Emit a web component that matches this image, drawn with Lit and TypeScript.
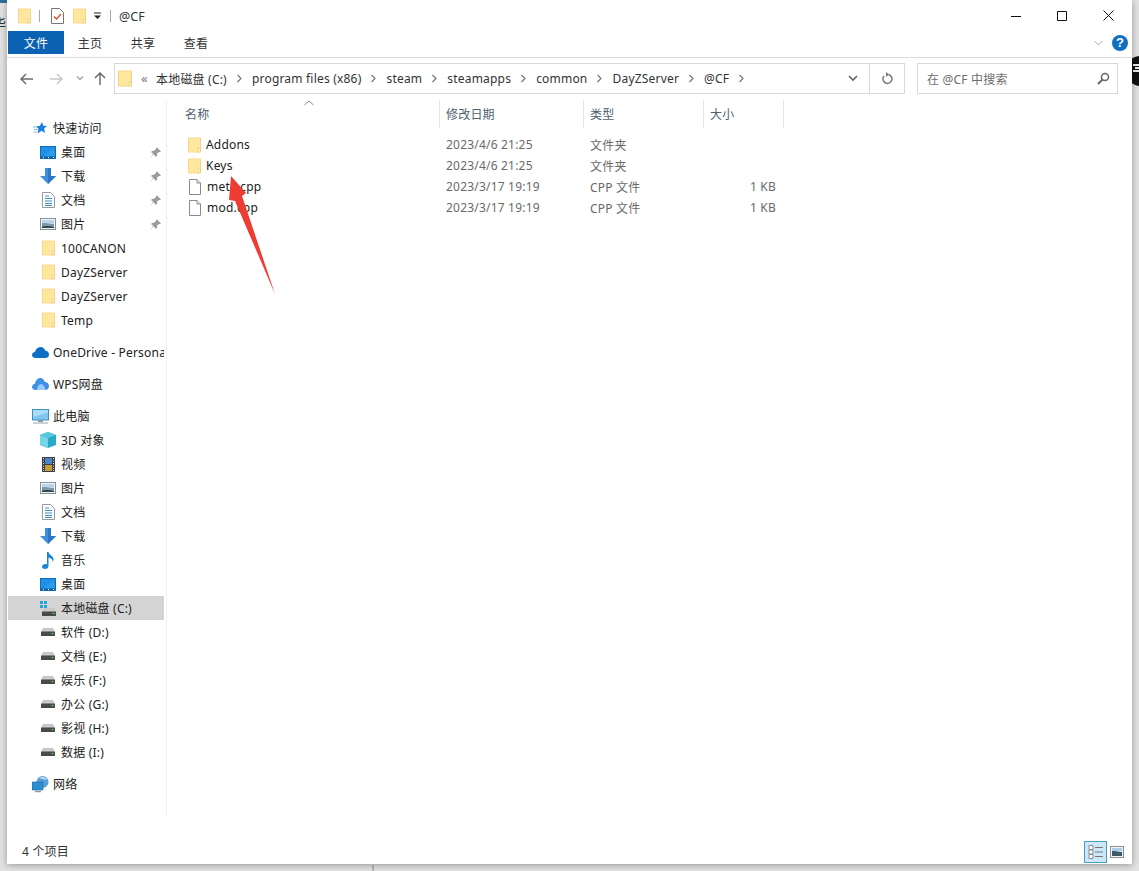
import { LitElement, html, css, svg } from "lit";
import { customElement } from "lit/decorators.js";

const folder = (w = 13, h = 16) => html`<svg width=${w} height=${h} viewBox="0 0 14 16"><path d="M.5.5h13v15H.5z" fill="#fee39a" stroke="#f3d27c"/><path d="M1 1h12v10.500H11v3.500H1z" fill="#ffe79f"/><path d="M11 11.500h2.500v4H11z" fill="#fff6d6" stroke="#eccb70" stroke-width=".8"/></svg>`;
const blank = html`<svg width="14" height="16" viewBox="0 0 14 16"><path d="M1.500.5h7.500l3.500 3.500v11.500h-11z" fill="#fff" stroke="#8a8a8a"/><path d="M9 .5v3.500h3.500" fill="#f0f0f0" stroke="#8a8a8a"/></svg>`;
const desktop = html`<svg width="16" height="13" viewBox="0 0 16 13"><rect x=".5" y=".5" width="15" height="12" fill="#1e90e6" stroke="#0f6cb8"/><path d="M3 10.500 14 2v8.500z" fill="#2e9cec"/><path d="M1 10.500h14v1.500H1z" fill="#0b5c9e"/><path d="M3 11.500h1M8 11.500h1M13 11.500h1" stroke="#fff"/></svg>`;
const download = html`<svg width="16" height="16" viewBox="0 0 16 16"><path d="M5 0h6v8h5l-8 8-8-8h5z" fill="#3e90de"/><path d="M8 0h3v8h5l-8 8z" fill="#2b78c6"/></svg>`;
const docIcon = html`<svg width="13" height="16" viewBox="0 0 13 16"><path d="M.5.5h8l4 4v11H.5z" fill="#fff" stroke="#9a9a9a"/><path d="M3 4h4M3 6.500h7M3 9h7M3 11.500h7M3 13.500h7" stroke="#3b8fc9"/></svg>`;
const picture = html`<svg width="16" height="12" viewBox="0 0 16 12"><rect x=".5" y=".5" width="15" height="11" fill="#f4f4f4" stroke="#8b8f93"/><path d="M2 2h12v3.500H2z" fill="#b7d6ee"/><path d="M2 5c4 0 7 .5 12 1v4H2z" fill="#7b98a4"/><path d="M2 8.500c4-1 8-.5 12 .5v1H2z" fill="#2d4552"/></svg>`;
const pin = html`<svg width="11" height="11" viewBox="0 0 11 11"><path d="M6.500 0 11 4.500l-1 .5-1-.2-2 2 .1 2L6 10 3.800 7.200 0 11l3.300-4.300L1 5l1.200-1.100 2-.1 2-2z" fill="#9a9a9a"/></svg>`;
const star = html`<svg width="14" height="12" viewBox="0 0 14 12"><path d="M9 0l1.300 3.700 3.700.3-2.800 2.600L12 11 8.500 8.800 4.500 11.500l1-4.500L3 4.300l3.800-.3z" fill="#1b80d6"/><path d="M0 5h3M1 7.500h3.500M.5 10H4" stroke="#7bbbea"/></svg>`;
const oneDrive = html`<svg width="17" height="11" viewBox="0 0 17 11"><path d="M3.500 11C1 11 0 9.500 0 8s1.200-3 3-3c.6-2.800 2.600-5 5.500-5 2.400 0 4 1.500 4.700 3.500C15.500 3.800 17 5.500 17 7.500S15.500 11 13.500 11z" fill="#0f6fc4"/></svg>`;
const wps = html`<svg width="17" height="12" viewBox="0 0 17 12"><path d="M3.500 12C1.200 12 0 10.500 0 9s1-3 2.800-3C3.500 3 5.300 0 8.200 0c2.300 0 3.800 1.700 4.400 3.800C15 4 17 5.800 17 8s-1.700 4-3.500 4z" fill="#3d8fe8"/><path d="M5 12c0-3 2-6 4-6s4 3 4.500 6z" fill="#9cc9f5"/></svg>`;
const pc = html`<svg width="17" height="15" viewBox="0 0 17 15"><rect x=".5" y=".5" width="16" height="10.500" fill="#7ec6ee" stroke="#3f8fc0"/><path d="M1 1h15v2.500L1 8z" fill="#a9dcf6"/><path d="M6 11h5v2H6z" fill="#8d9aa3"/><path d="M1 14h15" stroke="#9aa3aa"/></svg>`;
const cube = html`<svg width="16" height="16" viewBox="0 0 16 16"><path d="M8 0 16 3v10l-8 3-8-3V3z" fill="#2aa7c9"/><path d="M0 3 8 6v10l-8-3z" fill="#73d6e6"/><path d="M8 0 16 3 8 6 0 3z" fill="#55c8de"/></svg>`;
const video = html`<svg width="13" height="15" viewBox="0 0 13 15"><rect width="13" height="15" fill="#3a3f47"/><rect x="3" y="1" width="7" height="6" fill="#4f82c9"/><rect x="3" y="8" width="7" height="6" fill="#c99c3c"/><path d="M1 1.500h1M1 4h1M1 6.500h1M1 9h1M1 11.500h1M1 13.500h1M11 1.500h1M11 4h1M11 6.500h1M11 9h1M11 11.500h1M11 13.500h1" stroke="#ddd"/></svg>`;
const music = html`<svg width="12" height="17" viewBox="0 0 12 17"><path d="M5 0h1.500c.5 3 5 3.500 5 7.500 0 1-.3 1.800-.8 2.500.2-2.500-2.200-4-4.200-4.500V14c0 1.700-1.500 3-3.500 3C1.500 17 0 16.200 0 14.800 0 13.200 1.700 12 3.300 12c.6 0 1.200.1 1.700.4z" fill="#1b86d8"/></svg>`;
const drive = html`<svg width="14" height="8" viewBox="0 0 14 8"><path d="M2 0h10l2 4H0z" fill="#c8c8c8"/><rect y="3.500" width="14" height="4.500" rx=".5" fill="#4a4a4a"/><path d="M10.500 5.500h2" stroke="#4fdc6a"/></svg>`;
const cDrive = html`<svg width="16" height="15" viewBox="0 0 16 15"><path d="M0 0h3v3H0zM4 0h3v3H4zM0 4h3v3H0zM4 4h3v3H4z" fill="#1ea7dc"/><path d="M4 7h10l2 4H2z" fill="#c8c8c8"/><rect x="2" y="10.500" width="14" height="4.500" rx=".5" fill="#4a4a4a"/><path d="M12.500 12.500h2" stroke="#4fdc6a"/></svg>`;
const network = html`<svg width="17" height="17" viewBox="0 0 17 17"><circle cx="10.500" cy="6" r="6" fill="#5a9fd8"/><path d="M7 2c3-2 7-1 8 2-3-1-6-1-8-2z" fill="#bcdcf2"/><rect x="0" y="6" width="11" height="8" fill="#2d8fd0" stroke="#1a6a9e" stroke-width=".6"/><path d="M3 15.500h6" stroke="#8d9aa3" stroke-width="1.500"/></svg>`;

const chev = svg`<path d="M1.500 1 5 4.500 1.500 8" fill="none" stroke="#777" stroke-width="1.200"/>`;

type Row = { icon: unknown; text: string; level: number; pin?: boolean; sel?: boolean; gap?: boolean };
const nav: Row[] = [
  { icon: star, text: "快速访问", level: 0 },
  { icon: desktop, text: "桌面", level: 1, pin: true },
  { icon: download, text: "下载", level: 1, pin: true },
  { icon: docIcon, text: "文档", level: 1, pin: true },
  { icon: picture, text: "图片", level: 1, pin: true },
  { icon: folder(), text: "100CANON", level: 1 },
  { icon: folder(), text: "DayZServer", level: 1 },
  { icon: folder(), text: "DayZServer", level: 1 },
  { icon: folder(), text: "Temp", level: 1 },
  { icon: oneDrive, text: "OneDrive - Personal", level: 0, gap: true },
  { icon: wps, text: "WPS网盘", level: 0, gap: true },
  { icon: pc, text: "此电脑", level: 0, gap: true },
  { icon: cube, text: "3D 对象", level: 1 },
  { icon: video, text: "视频", level: 1 },
  { icon: picture, text: "图片", level: 1 },
  { icon: docIcon, text: "文档", level: 1 },
  { icon: download, text: "下载", level: 1 },
  { icon: music, text: "音乐", level: 1 },
  { icon: desktop, text: "桌面", level: 1 },
  { icon: cDrive, text: "本地磁盘 (C:)", level: 1, sel: true },
  { icon: drive, text: "软件 (D:)", level: 1 },
  { icon: drive, text: "文档 (E:)", level: 1 },
  { icon: drive, text: "娱乐 (F:)", level: 1 },
  { icon: drive, text: "办公 (G:)", level: 1 },
  { icon: drive, text: "影视 (H:)", level: 1 },
  { icon: drive, text: "数据 (I:)", level: 1 },
  { icon: network, text: "网络", level: 0, gap: true },
];

const files = [
  { icon: folder(), name: "Addons", date: "2023/4/6 21:25", type: "文件夹", size: "" },
  { icon: folder(), name: "Keys", date: "2023/4/6 21:25", type: "文件夹", size: "" },
  { icon: blank, name: "meta.cpp", date: "2023/3/17 19:19", type: "CPP 文件", size: "1 KB" },
  { icon: blank, name: "mod.cpp", date: "2023/3/17 19:19", type: "CPP 文件", size: "1 KB" },
];

const crumbs = ["本地磁盘 (C:)", "program files (x86)", "steam", "steamapps", "common", "DayZServer", "@CF"];

@customElement("app-root")
export class AppRoot extends LitElement {
  static styles = css`
    :host {
      display: block;
      position: relative;
      width: 1139px;
      height: 871px;
      overflow: hidden;
      background: #e2e2e2;
      font-family: "Noto Sans", "Noto Sans CJK SC", sans-serif;
      font-size: 12px;
      letter-spacing: 0.2px;
      color: #1c1c1c;
    }
    svg { display: block; flex: none; }
    .window {
      position: absolute;
      left: 7px;
      top: 0;
      width: 1125px;
      height: 864px;
      background: #fff;
      display: flex;
      flex-direction: column;
      box-shadow: 0 1px 7px rgba(0, 0, 0, 0.35);
    }
    .title { height: 31px; display: flex; align-items: center; padding-left: 11px; }
    .sep { width: 1px; height: 12px; background: #a8a8a8; }
    .title-text { margin-left: 8px; color: #333; font-size: 12.5px; letter-spacing: 0; padding-top: 1px; }
    .controls { margin-left: auto; display: flex; padding-right: 1px; }
    .ctl { width: 46px; height: 31px; display: flex; align-items: center; justify-content: center; }
    .tabs { height: 23px; display: flex; align-items: stretch; padding-left: 1px; }
    .tab { width: 53px; display: flex; align-items: center; justify-content: center; color: #333; padding-right: 1px; box-sizing: border-box; }
    .tab-file { width: 56px; background: #0b62b2; color: #fff; padding-right: 0; }
    .tabs-right { margin-left: auto; display: flex; align-items: center; gap: 9px; padding-right: 4px; }
    .help {
      width: 16px; height: 16px; border-radius: 50%; background: #0f6fc0; color: #fff;
      font: bold 13px/16px "Liberation Sans", sans-serif; text-align: center;
    }
    .addr-row {
      height: 38px; margin-top: 3px; border-top: 1px solid #dcdcdc; box-sizing: border-box;
      display: flex; align-items: center; padding: 5px 14px 1px 13px;
    }
    .navs { width: 94px; display: flex; align-items: center; }
    .addr {
      width: 791px; height: 31px; box-sizing: border-box; border: 1px solid #d9d9d9;
      display: flex; align-items: center; padding-left: 3px;
    }
    .crumbs { display: flex; align-items: center; flex: 1; color: #333; }
    .back { width: 24px; color: #777; padding-left: 9px; box-sizing: border-box; font-size: 13px; line-height: 1; }
    .cs { width: 25px; display: flex; justify-content: center; }
    .addr-down { width: 32px; display: flex; justify-content: center; }
    .refresh { width: 34px; height: 100%; border-left: 1px solid #d9d9d9; display: flex; align-items: center; justify-content: center; }
    .search {
      width: 201px; height: 31px; margin-left: 12px; box-sizing: border-box; border: 1px solid #d9d9d9;
      display: flex; align-items: center; padding: 0 7px 0 9px; color: #6d6d6d;
    }
    .search svg { margin-left: auto; }
    .body { flex: 1; display: flex; min-height: 0; margin-top: 5px; }
    .side { width: 156px; padding-top: 16px; overflow: hidden; flex: none; margin: 0 2px 0 1px; }
    .row { height: 24px; display: flex; align-items: center; white-space: nowrap; color: #222; }
    .row.gap { margin-top: 8px; }
    .row.sel { background: #d4d4d4; }
    .ic { width: 16px; height: 24px; display: flex; align-items: center; justify-content: center; flex: none; margin-right: 5px; }
    .l0 { padding-left: 24px; }
    .l1 { padding-left: 32px; }
    .pin { margin-left: auto; margin-right: 3px; }
    .vline { width: 1px; background: #efefef; margin-bottom: 24px; flex: none; }
    .main { flex: 1; padding-left: 11px; position: relative; }
    .head { display: grid; grid-template-columns: 262px 144px 120px 80px; height: 28px; }
    .hc { border-right: 1px solid #e4e4e4; padding-left: 6px; color: #4f5f70; display: flex; align-items: center; }
    .hc:first-child { padding-left: 7px; }
    .caret { position: absolute; left: 137px; top: 0; }
    .files { margin-top: 6px; }
    .file { display: grid; grid-template-columns: 262px 144px 120px 80px; height: 21px; align-items: center; color: #6a6a6a; }
    .name { display: flex; align-items: center; gap: 5px; padding-left: 10px; color: #1c1c1c; }
    .date, .type { padding-left: 6px; }
    .size { text-align: right; padding-right: 8px; }
    .status { height: 24px; display: flex; align-items: center; justify-content: space-between; padding: 0 8px 0 15px; color: #333; }
    .status span { padding-bottom: 2px; }
    .views { display: flex; align-items: center; gap: 3px; }
    .view-on {
      width: 23px; height: 22px; box-sizing: border-box; background: #cce8f8; border: 1px solid #4a9cc4;
      display: flex; align-items: center; justify-content: center;
    }
    .arrow { position: absolute; left: 225px; top: 170px; pointer-events: none; }
    .left-char { position: absolute; left: -8px; top: 14px; font-size: 14px; color: #333; line-height: 20px; }
    .left-top { position: absolute; left: 0; top: 0; width: 7px; height: 3px; background: #2f6f9f; }
    .blob { position: absolute; left: 1126px; top: 56px; width: 28px; height: 30px; border-radius: 50%; background: #111; }
    .blob-mark { position: absolute; left: 1133px; top: 64px; width: 6px; height: 2px; background: #eee; box-shadow: 0 6px 0 #eee, 2px 3px 0 #eee; }
    .bottom-mark { position: absolute; left: 372px; top: 865px; width: 2px; height: 6px; background: #b8b8b8; }
  `;

  render() {
    return html`
      <div class="left-top"></div>
      <div class="left-char">毕</div>
      <div class="blob"></div>
      <div class="blob-mark"></div>
      <div class="bottom-mark"></div>
      <div class="window">
        <div class="title">
          ${folder()}
          <div class="sep" style="margin:0 11px 0 8px"></div>
          <svg width="13" height="16" viewBox="0 0 13 16"><path d="M.5.500h8l4 4v11H.5z" fill="#fff" stroke="#777"/><path d="M3 8.500l2.500 2.500L10 6" fill="none" stroke="#d9532c" stroke-width="1.400"/></svg>
          <div style="width:9px"></div>
          ${folder()}
          <svg style="margin:0 5px 0 7px" width="9" height="8" viewBox="0 0 9 8"><path d="M1 1h7" stroke="#222"/><path d="M1 3.500h7L4.500 7z" fill="#222"/></svg>
          <div class="sep" style="margin-left:3px"></div>
          <span class="title-text">@CF</span>
          <div class="controls">
            <div class="ctl"><svg width="10" height="10" viewBox="0 0 10 10"><path d="M0 5.500h10" stroke="#111"/></svg></div>
            <div class="ctl"><svg width="10" height="10" viewBox="0 0 10 10"><path d="M.5.500h9v9h-9z" fill="none" stroke="#111"/></svg></div>
            <div class="ctl"><svg width="11" height="11" viewBox="0 0 11 11"><path d="M.5.500l10 10M10.500.500l-10 10" stroke="#111"/></svg></div>
          </div>
        </div>
        <div class="tabs">
          <div class="tab tab-file">文件</div>
          <div class="tab">主页</div>
          <div class="tab">共享</div>
          <div class="tab">查看</div>
          <div class="tabs-right">
            <svg width="9" height="6" viewBox="0 0 9 6"><path d="M.5 1 4.500 5 8.500 1" fill="none" stroke="#aaa"/></svg>
            <div class="help">?</div>
          </div>
        </div>
        <div class="addr-row">
          <div class="navs">
            <svg width="13" height="12" viewBox="0 0 13 12"><path d="M6 1 1 6l5 5M1 6h12" fill="none" stroke="#6d6d6d" stroke-width="1.500"/></svg>
            <svg style="margin-left:17px" width="13" height="12" viewBox="0 0 13 12"><path d="M7 1l5 5-5 5M12 6H0" fill="none" stroke="#c8c8c8" stroke-width="1.500"/></svg>
            <svg style="margin-left:13px" width="8" height="5" viewBox="0 0 8 5"><path d="M1 .5 4 3.500 7 .5" fill="none" stroke="#999" stroke-width="1.200"/></svg>
            <svg style="margin-left:10px" width="12" height="13" viewBox="0 0 12 13"><path d="M1 6l5-5 5 5M6 1v12" fill="none" stroke="#6d6d6d" stroke-width="1.500"/></svg>
          </div>
          <div class="addr">
            ${folder(14, 17)}
            <div class="crumbs">
              <div class="back">«</div>
              ${crumbs.map(
                (c) => html`<span>${c}</span><div class="cs"><svg width="7" height="9" viewBox="0 0 7 9">${chev}</svg></div>`
              )}
            </div>
            <div class="addr-down"><svg width="10" height="7" viewBox="0 0 10 7"><path d="M1 1l4 4 4-4" fill="none" stroke="#666" stroke-width="1.600"/></svg></div>
            <div class="refresh"><svg width="12" height="13" viewBox="0 0 12 13"><path d="M7.500 2.500A4.500 4.500 0 1 1 3 4" fill="none" stroke="#777" stroke-width="1.500"/><path d="M5 0v5l3-2.500z" fill="#777"/></svg></div>
          </div>
          <div class="search">
            <span>在 @CF 中搜索</span>
            <svg width="13" height="13" viewBox="0 0 13 13"><circle cx="8" cy="5" r="3.500" fill="none" stroke="#666" stroke-width="1.500"/><path d="M5.500 7.500 1 12" stroke="#666" stroke-width="2"/></svg>
          </div>
        </div>
        <div class="body">
          <div class="side">
            ${nav.map(
              (r) => html`<div class="row l${r.level} ${r.sel ? "sel" : ""} ${r.gap ? "gap" : ""}">
                <div class="ic">${r.icon}</div><span>${r.text}</span>
                ${r.pin ? html`<div class="pin">${pin}</div>` : ""}
              </div>`
            )}
          </div>
          <div class="vline"></div>
          <div class="main">
            <svg class="caret" width="10" height="6" viewBox="0 0 10 6"><path d="M.5 5 5 1l4.500 4" fill="none" stroke="#888"/></svg>
            <div class="head">
              <div class="hc">名称</div><div class="hc">修改日期</div><div class="hc">类型</div><div class="hc">大小</div>
            </div>
            <div class="files">
              ${files.map(
                (f) => html`<div class="file">
                  <div class="name">${f.icon}<span>${f.name}</span></div>
                  <div class="date">${f.date}</div>
                  <div class="type">${f.type}</div>
                  <div class="size">${f.size}</div>
                </div>`
              )}
            </div>
          </div>
        </div>
        <div class="status">
          <span>4 个项目</span>
          <div class="views">
            <div class="view-on">
              <svg width="16" height="14" viewBox="0 0 16 14"><path d="M1 .5h4v4H1zM1 5h4v4H1zM1 9.500h4v4H1z" fill="#fff" stroke="#8a8a8a"/><path d="M7 2.500h8M7 7h8M7 11.500h8" stroke="#777" stroke-width="1.200"/></svg>
            </div>
            <svg width="14" height="12" viewBox="0 0 14 12"><rect x=".5" y=".5" width="13" height="11" fill="#f4f4f4" stroke="#8b8f93"/><path d="M2 2h10v3H2z" fill="#a8cdea"/><path d="M2 5c3 0 6 .5 10 1v4H2z" fill="#3d5a68"/></svg>
          </div>
        </div>
      </div>
      <svg class="arrow" width="56" height="128" viewBox="0 0 56 128">
        <path d="M6 6 21 23 17 26 50 124 10 31 4 30z" fill="#ee3b33"/>
      </svg>
    `;
  }
}
